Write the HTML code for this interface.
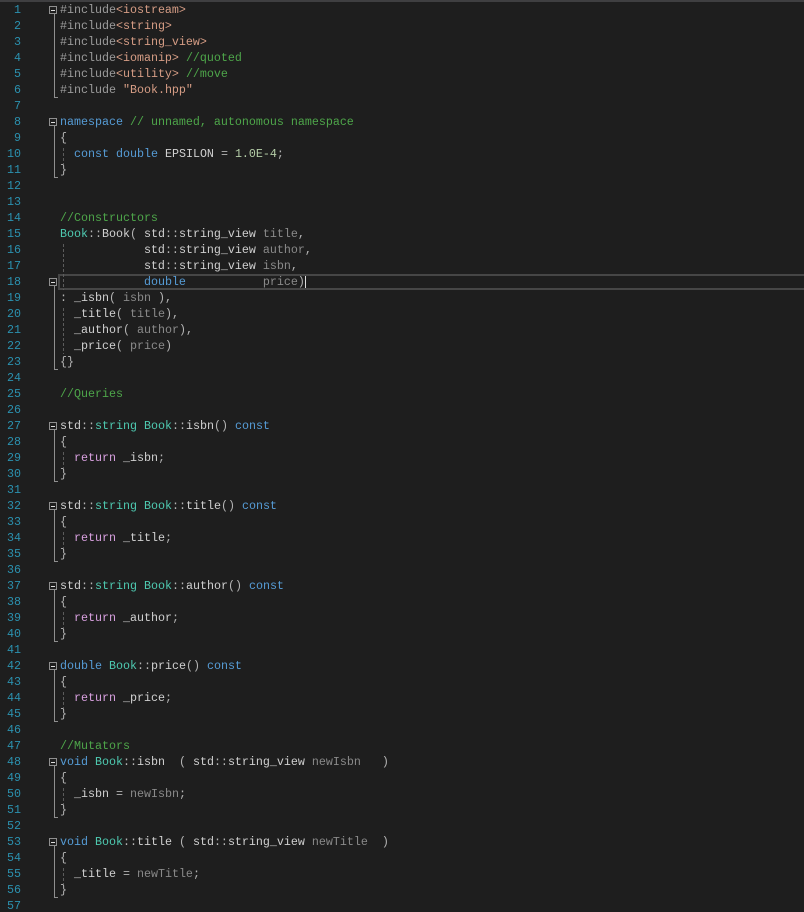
<!DOCTYPE html>
<html>
<head>
<meta charset="utf-8">
<style>
html,body{margin:0;padding:0;width:804px;height:912px;overflow:hidden;background:#1e1e1e;}
body{position:relative;font-family:"Liberation Mono",monospace;font-size:11.67px;line-height:16px;color:#d0d0d0;}
#top{position:absolute;left:0;top:0;width:804px;height:2px;background:#3f3f41;}
#cur{position:absolute;left:58px;top:274px;width:746px;height:12px;border:2px solid #464646;border-right:0;}
#caret{position:absolute;left:305px;top:276px;width:1px;height:12px;background:#dcdcdc;}
pre{position:absolute;margin:0;font:inherit;line-height:16px;}
#nums{left:0;top:2px;width:21px;text-align:right;color:#2b91af;}
#code{left:60px;top:2px;}
svg{position:absolute;left:0;top:0;}
.k{color:#569cd6}.c{color:#4ea64a}.t{color:#4ec9b0}.p{color:#9b9b9b}.s{color:#d69d85}.a{color:#8a8a8a}.n{color:#b5cea8}.r{color:#d8a0df}.o{color:#b4b4b4}
</style>
</head>
<body>
<div id="top"></div>
<div id="cur"></div>
<div id="caret"></div>
<svg width="804" height="912" fill="none" stroke="#8f8f8f" stroke-width="1" shape-rendering="crispEdges">
<g>
<rect x="49.5" y="6.5" width="7" height="7"/><path d="M54.5 14V97.5H58"/>
<rect x="49.5" y="118.5" width="7" height="7"/><path d="M54.5 126V177.5H58"/>
<rect x="49.5" y="278.5" width="7" height="7"/><path d="M54.5 286V369.5H58"/>
<rect x="49.5" y="422.5" width="7" height="7"/><path d="M54.5 430V481.5H58"/>
<rect x="49.5" y="502.5" width="7" height="7"/><path d="M54.5 510V561.5H58"/>
<rect x="49.5" y="582.5" width="7" height="7"/><path d="M54.5 590V641.5H58"/>
<rect x="49.5" y="662.5" width="7" height="7"/><path d="M54.5 670V721.5H58"/>
<rect x="49.5" y="758.5" width="7" height="7"/><path d="M54.5 766V817.5H58"/>
<rect x="49.5" y="838.5" width="7" height="7"/><path d="M54.5 846V897.5H58"/>
</g>
<g stroke="#dcdcdc">
<path d="M51 10.5h4M51 122.5h4M51 282.5h4M51 426.5h4M51 506.5h4M51 586.5h4M51 666.5h4M51 762.5h4M51 842.5h4"/>
</g>
<g stroke="#5c5c5c" stroke-dasharray="3 2">
<path d="M63.5 148V164"/>
<path d="M63.5 244V290"/>
<path d="M63.5 308V354"/>
<path d="M63.5 452V468"/>
<path d="M63.5 532V548"/>
<path d="M63.5 612V628"/>
<path d="M63.5 692V708"/>
<path d="M63.5 788V804"/>
<path d="M63.5 868V884"/>
</g>
</svg>
<pre id="nums">1
2
3
4
5
6
7
8
9
10
11
12
13
14
15
16
17
18
19
20
21
22
23
24
25
26
27
28
29
30
31
32
33
34
35
36
37
38
39
40
41
42
43
44
45
46
47
48
49
50
51
52
53
54
55
56
57</pre>
<pre id="code"><span class="p">#include</span><span class="s">&lt;iostream&gt;</span>
<span class="p">#include</span><span class="s">&lt;string&gt;</span>
<span class="p">#include</span><span class="s">&lt;string_view&gt;</span>
<span class="p">#include</span><span class="s">&lt;iomanip&gt;</span> <span class="c">//quoted</span>
<span class="p">#include</span><span class="s">&lt;utility&gt;</span> <span class="c">//move</span>
<span class="p">#include</span> <span class="s">"Book.hpp"</span>

<span class="k">namespace</span> <span class="c">// unnamed, autonomous namespace</span>
<span class="o">{</span>
  <span class="k">const</span> <span class="k">double</span> EPSILON <span class="o">=</span> <span class="n">1.0E-4</span><span class="o">;</span>
<span class="o">}</span>


<span class="c">//Constructors</span>
<span class="t">Book</span><span class="o">::</span>Book<span class="o">(</span> std<span class="o">::</span>string_view <span class="a">title</span><span class="o">,</span>
            std<span class="o">::</span>string_view <span class="a">author</span><span class="o">,</span>
            std<span class="o">::</span>string_view <span class="a">isbn</span><span class="o">,</span>
            <span class="k">double</span>           <span class="a">price</span><span class="o">)</span>
<span class="o">:</span> _isbn<span class="o">(</span> <span class="a">isbn</span> <span class="o">),</span>
  _title<span class="o">(</span> <span class="a">title</span><span class="o">),</span>
  _author<span class="o">(</span> <span class="a">author</span><span class="o">),</span>
  _price<span class="o">(</span> <span class="a">price</span><span class="o">)</span>
<span class="o">{}</span>

<span class="c">//Queries</span>

std<span class="o">::</span><span class="t">string</span> <span class="t">Book</span><span class="o">::</span>isbn<span class="o">()</span> <span class="k">const</span>
<span class="o">{</span>
  <span class="r">return</span> _isbn<span class="o">;</span>
<span class="o">}</span>

std<span class="o">::</span><span class="t">string</span> <span class="t">Book</span><span class="o">::</span>title<span class="o">()</span> <span class="k">const</span>
<span class="o">{</span>
  <span class="r">return</span> _title<span class="o">;</span>
<span class="o">}</span>

std<span class="o">::</span><span class="t">string</span> <span class="t">Book</span><span class="o">::</span>author<span class="o">()</span> <span class="k">const</span>
<span class="o">{</span>
  <span class="r">return</span> _author<span class="o">;</span>
<span class="o">}</span>

<span class="k">double</span> <span class="t">Book</span><span class="o">::</span>price<span class="o">()</span> <span class="k">const</span>
<span class="o">{</span>
  <span class="r">return</span> _price<span class="o">;</span>
<span class="o">}</span>

<span class="c">//Mutators</span>
<span class="k">void</span> <span class="t">Book</span><span class="o">::</span>isbn  <span class="o">(</span> std<span class="o">::</span>string_view <span class="a">newIsbn</span>   <span class="o">)</span>
<span class="o">{</span>
  _isbn <span class="o">=</span> <span class="a">newIsbn</span><span class="o">;</span>
<span class="o">}</span>

<span class="k">void</span> <span class="t">Book</span><span class="o">::</span>title <span class="o">(</span> std<span class="o">::</span>string_view <span class="a">newTitle</span>  <span class="o">)</span>
<span class="o">{</span>
  _title <span class="o">=</span> <span class="a">newTitle</span><span class="o">;</span>
<span class="o">}</span>
</pre>
</body>
</html>
